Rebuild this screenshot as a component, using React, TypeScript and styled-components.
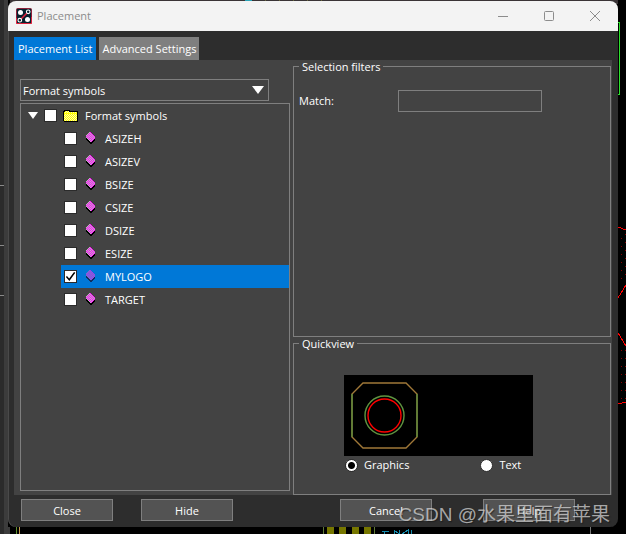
import React, { useState } from "react";
import styled, { createGlobalStyle } from "styled-components";

const GlobalStyle = createGlobalStyle`
  *, *::before, *::after { box-sizing: border-box; }
  html, body, #root { height: 100%; }
  body {
    margin: 0;
    overflow: hidden;
    background: #000;
    color: #fff;
    font: 11px/16px "Open Sans", "Noto Sans", sans-serif;
  }
  button, input, select { font: inherit; color: inherit; margin: 0; }
`;

const line = "#7f7f7f";

const Desktop = styled.div`
  position: relative;
  height: 100vh;
  padding: 1px 8px 7px;
`;

const Board = styled.svg`
  position: absolute;
  inset: 0;
  width: 100%;
  height: 100%;
`;

const Window = styled.main`
  position: relative;
  height: 100%;
  display: flex;
  flex-direction: column;
  background: #2d2d2d;
  box-shadow: inset 1px 0 #4a4a4a;
  border-radius: 8px;
  overflow: hidden;
`;

const TitleBar = styled.header`
  display: flex;
  align-items: center;
  flex: none;
  height: 30px;
  padding-left: 8px;
  background: #f3f3f3;
  color: #8c8c8c;
`;

const Title = styled.h1`
  flex: 1;
  margin: 0 0 0 5px;
  font-size: 11px;
  font-weight: 400;
`;

const WindowButton = styled.button`
  display: grid;
  place-items: center;
  width: 46px;
  height: 30px;
  padding: 0;
  border: 0;
  background: none;
  color: #8c8c8c;
`;

const Tabs = styled.div`
  display: flex;
  gap: 3px;
  flex: none;
  margin-top: 6px;
  padding-left: 6px;
`;

const Tab = styled.button<{ $active: boolean }>`
  height: 23px;
  padding: 0 3px 0 4px;
  border: 0;
  white-space: nowrap;
  background: ${(p) => (p.$active ? "#0078d7" : "#7f7f7f")};
`;

const Panel = styled.div`
  flex: 1;
  min-height: 0;
  display: grid;
  grid-template-columns: 270fr 318fr;
  column-gap: 3px;
  margin: 0 6px;
  padding: 0 1px 0 6px;
  background: #434343;
`;

const ListColumn = styled.section`
  display: flex;
  flex-direction: column;
  gap: 2px;
  min-width: 0;
  padding: 19px 0 4px;
`;

const SelectWrap = styled.div`
  display: grid;
  align-items: center;
  margin-right: 21px;
  > * { grid-area: 1 / 1; }
  > svg { justify-self: end; margin-right: 5px; pointer-events: none; }
`;

const Select = styled.select`
  appearance: none;
  width: 100%;
  height: 22px;
  padding: 1px 2px 0;
  border: 1px solid ${line};
  border-radius: 0;
  background: #434343;
`;

const Tree = styled.ul`
  flex: 1;
  margin: 0;
  padding: 0;
  list-style: none;
  border: 1px solid ${line};
`;

const SubTree = styled.ul`
  margin: 0;
  padding: 0 0 0 40px;
  list-style: none;
`;

const Row = styled.label<{ $selected?: boolean }>`
  display: flex;
  align-items: center;
  height: 23px;
  padding-left: 3px;
  background: ${(p) => (p.$selected ? "#0078d7" : "transparent")};
`;

const RootRow = styled.div`
  display: flex;
  align-items: center;
  padding-left: 6px;
`;

const Twisty = styled.button`
  display: grid;
  place-items: center;
  width: 12px;
  height: 12px;
  padding: 0;
  margin-right: 2px;
  border: 0;
  background: none;
`;

const Check = styled.input`
  appearance: none;
  flex: none;
  display: grid;
  width: 13px;
  height: 13px;
  border: 1px solid #2b2b2b;
  background: #fff;
  &:checked::before {
    content: "";
    width: 11px;
    height: 11px;
    background: #000;
    clip-path: polygon(8% 55%, 18% 45%, 38% 68%, 82% 10%, 94% 16%, 40% 90%);
  }
`;

const IconSlot = styled.span`
  display: flex;
  flex: none;
  width: 16px;
  margin: 0 6px;
`;

const GroupColumn = styled.div`
  display: flex;
  flex-direction: column;
  min-width: 0;
`;

const Group = styled.fieldset<{ $grow?: boolean }>`
  flex: ${(p) => (p.$grow ? "1" : "none")};
  height: ${(p) => (p.$grow ? "auto" : "158px")};
  min-width: 0;
  margin: 0;
  padding: 0 5px;
  border: 1px solid ${line};
`;

const Legend = styled.legend`
  height: 13px;
  padding: 0 3px;
  line-height: 13px;
`;

const MatchRow = styled.div`
  display: flex;
  align-items: center;
  padding-top: 17px;
`;

const MatchLabel = styled.label`
  width: 99px;
`;

const MatchInput = styled.input`
  width: 144px;
  height: 22px;
  padding: 0 4px;
  border: 1px solid ${line};
  background: #434343;
`;

const Preview = styled.div`
  width: 189px;
  height: 81px;
  margin: 25px 0 0 45px;
  background: #000;
`;

const Radios = styled.div`
  display: flex;
  gap: 71px;
  margin: 1px 0 0 46px;
`;

const RadioLabel = styled.label`
  display: flex;
  align-items: center;
  gap: 6px;
`;

const Radio = styled.input`
  appearance: none;
  width: 13px;
  height: 13px;
  border: 1px solid #2b2b2b;
  border-radius: 50%;
  background: #fff;
  &:checked { background: radial-gradient(circle, #000 3px, #fff 4px); }
`;

const Footer = styled.footer`
  flex: none;
  display: flex;
  justify-content: space-between;
  padding: 4px 43px 6px 13px;
`;

const FooterGroup = styled.div<{ $gap: number }>`
  display: grid;
  grid-template-columns: 92px 92px;
  gap: ${(p) => p.$gap}px;
`;

const Action = styled.button`
  height: 22px;
  padding: 1px 0 0;
  border: 1px solid ${line};
  background: #535353;
`;

const Watermark = styled.div`
  position: absolute;
  right: 16px;
  bottom: 5px;
  color: rgba(225, 225, 225, 0.7);
  font: 19px/28px "Liberation Sans", "Noto Sans CJK SC", sans-serif;
  text-shadow: 1px 1px 1px rgba(20, 20, 20, 0.6);
  white-space: nowrap;
  pointer-events: none;
`;

const Triangle = ({ width, height }: { width: number; height: number }) => (
  <svg width={width} height={height} viewBox="0 0 12 8" preserveAspectRatio="none">
    <path d="M0 0H12L6 8Z" fill="#fff" />
  </svg>
);

const Folder = () => (
  <svg width="15" height="12" shapeRendering="crispEdges">
    <defs>
      <pattern id="folder-fill" width="2" height="2" patternUnits="userSpaceOnUse">
        <rect width="2" height="2" fill="#ff0" />
        <path d="M0 0H1V1H0ZM1 1H2V2H1Z" fill="#fffbb0" />
      </pattern>
    </defs>
    <path d="M1 0H7V1H15V12H1V11H0V1H1Z" fill="#000" />
    <path d="M2 1H6V2H14V11H1V2H2Z" fill="url(#folder-fill)" />
    <path d="M1 3H14V4H1Z" fill="#ff0" />
  </svg>
);

const Chip = ({ selected }: { selected: boolean }) => {
  const id = selected ? "chip-on" : "chip-off";
  return (
    <svg width="14" height="13" shapeRendering="crispEdges">
      <defs>
        <pattern id={id} width="2" height="2" patternUnits="userSpaceOnUse">
          <rect width="2" height="2" fill={selected ? "#a030f0" : "#f0f"} />
          <path d="M0 0H1V1H0ZM1 1H2V2H1Z" fill={selected ? "#6f80c8" : "#c0c0c0"} />
        </pattern>
      </defs>
      <path d="M3 4L7 9L12 5V8L8 12H7L3 7Z" fill={selected ? "#102f60" : "#000"} />
      <path d="M6 0H7L12 5V6L8 10H7L3 5V3Z" fill={`url(#${id})`} />
    </svg>
  );
};

const Logo = () => (
  <svg width="16" height="16" viewBox="0 0 16 16">
    <rect x=".5" y=".5" width="15" height="15" rx="1" fill="#08222e" stroke="#8c2038" />
    <path d="M.5 10V15.500H15.500V9" fill="none" stroke="#e0203c" />
    <path d="M3 13L13 3" stroke="#e0203c" strokeWidth="1.6" />
    <circle cx="4.5" cy="4.5" r="2.5" fill="#fff" />
    <circle cx="11.5" cy="11.5" r="2.5" fill="#fff" />
    <circle cx="12.2" cy="3.8" r="1.8" fill="#08222e" stroke="#fff" strokeWidth="1.1" />
    <circle cx="3.8" cy="12.2" r="1.8" fill="#08222e" stroke="#fff" strokeWidth="1.1" />
  </svg>
);

const symbols = ["ASIZEH", "ASIZEV", "BSIZE", "CSIZE", "DSIZE", "ESIZE", "MYLOGO", "TARGET"];

export default function App() {
  const [tab, setTab] = useState("Placement List");
  const [picked, setPicked] = useState("MYLOGO");
  const [view, setView] = useState("Graphics");
  return (
    <>
      <GlobalStyle />
      <Desktop>
        <Board aria-hidden="true" shapeRendering="crispEdges">
          <path d="M0 0H5V534H0Z" fill="#2b2b2b" />
          <path d="M4 0H8V527H10V534H4Z" fill="#3c3c3c" />
          <path d="M0 185.5H4M0 245.5H4M0 295.5H4" stroke="#8a8a8a" />
          <path d="M10 0H618V4H10Z" fill="#3a3436" />
          <path d="M245 0H252V1H245Z" fill="#2aa4b8" />
          <path d="M265 .5H325" stroke="#66653a" strokeDasharray="1 13" />
          <path d="M618 22.5H619.5V94.5H618" fill="none" stroke="#2ee02e" />
          <path d="M618 227L626 230M626 285L618 298M618 333L626 346M626 402L618 404" stroke="#f00" />
          <path d="M621.5 238V286M625.5 234V280M621.5 350V400M625.5 350V400" stroke="#800" strokeDasharray="1 7" />
          <path d="M16.5 527V534" stroke="#5f8f2f" />
          <path d="M19.5 527V534" stroke="#c89850" />
          <path d="M323.5 527V534M374.5 527V534" stroke="#5f7a35" />
          <path d="M327 527H334V534H327ZM339 527H346V534H339ZM352 527H359V534H352ZM364 527H371V534H364Z" fill="#777700" />
          <path d="M382 526H387M382 531H389M384 531V534M394 534V530L399 534V530M402 534L408 530V534M411 530V534" fill="none" stroke="#168cae" />
          <path d="M590.5 527V534" stroke="#777" />
        </Board>
        <Window>
          <TitleBar>
            <Logo />
            <Title>Placement</Title>
            <WindowButton aria-label="Minimize">
              <svg width="10" height="10"><path d="M0 5.5H10" stroke="currentColor" /></svg>
            </WindowButton>
            <WindowButton aria-label="Maximize">
              <svg width="10" height="10"><rect x=".5" y=".5" width="9" height="9" rx="1" fill="none" stroke="currentColor" /></svg>
            </WindowButton>
            <WindowButton aria-label="Close window">
              <svg width="10" height="10"><path d="M0 0L10 10M10 0L0 10" stroke="currentColor" /></svg>
            </WindowButton>
          </TitleBar>
          <Tabs role="tablist">
            {["Placement List", "Advanced Settings"].map((name) => (
              <Tab key={name} role="tab" aria-selected={tab === name} $active={tab === name} onClick={() => setTab(name)}>
                {name}
              </Tab>
            ))}
          </Tabs>
          <Panel>
            <ListColumn>
              <SelectWrap>
                <Select aria-label="Symbol type">
                  <option>Format symbols</option>
                </Select>
                <Triangle width={12} height={8} />
              </SelectWrap>
              <Tree>
                <li>
                  <RootRow>
                    <Twisty aria-label="Collapse Format symbols"><Triangle width={10} height={7} /></Twisty>
                    <Row>
                      <Check type="checkbox" />
                      <IconSlot><Folder /></IconSlot>
                      Format symbols
                    </Row>
                  </RootRow>
                  <SubTree>
                    {symbols.map((name) => (
                      <li key={name}>
                        <Row $selected={picked === name}>
                          <Check type="checkbox" checked={picked === name} onChange={() => setPicked(picked === name ? "" : name)} />
                          <IconSlot><Chip selected={picked === name} /></IconSlot>
                          {name}
                        </Row>
                      </li>
                    ))}
                  </SubTree>
                </li>
              </Tree>
            </ListColumn>
            <GroupColumn>
              <Group $grow>
                <Legend>Selection filters</Legend>
                <MatchRow>
                  <MatchLabel htmlFor="match">Match:</MatchLabel>
                  <MatchInput id="match" />
                </MatchRow>
              </Group>
              <Group>
                <Legend>Quickview</Legend>
                <Preview>
                  <svg width="81" height="81" fill="none" strokeWidth="1.4">
                    <path d="M19 8H62L73 19V62L62 73H19L8 62V19Z" stroke="#a07838" />
                    <path d="M8 19V62M73 19V62" stroke="#5c8c3c" />
                    <circle cx="40.500" cy="40.500" r="19.500" stroke="#5f9440" />
                    <circle cx="40.500" cy="40.500" r="16.500" stroke="#f00" />
                  </svg>
                </Preview>
                <Radios>
                  {["Graphics", "Text"].map((name) => (
                    <RadioLabel key={name}>
                      <Radio type="radio" name="view" checked={view === name} onChange={() => setView(name)} />
                      {name}
                    </RadioLabel>
                  ))}
                </Radios>
              </Group>
            </GroupColumn>
          </Panel>
          <Footer>
            <FooterGroup $gap={28}>
              <Action>Close</Action>
              <Action>Hide</Action>
            </FooterGroup>
            <FooterGroup $gap={51}>
              <Action>Cancel</Action>
              <Action>Help</Action>
            </FooterGroup>
          </Footer>
        </Window>
        <Watermark>CSDN @水果里面有苹果</Watermark>
      </Desktop>
    </>
  );
}
